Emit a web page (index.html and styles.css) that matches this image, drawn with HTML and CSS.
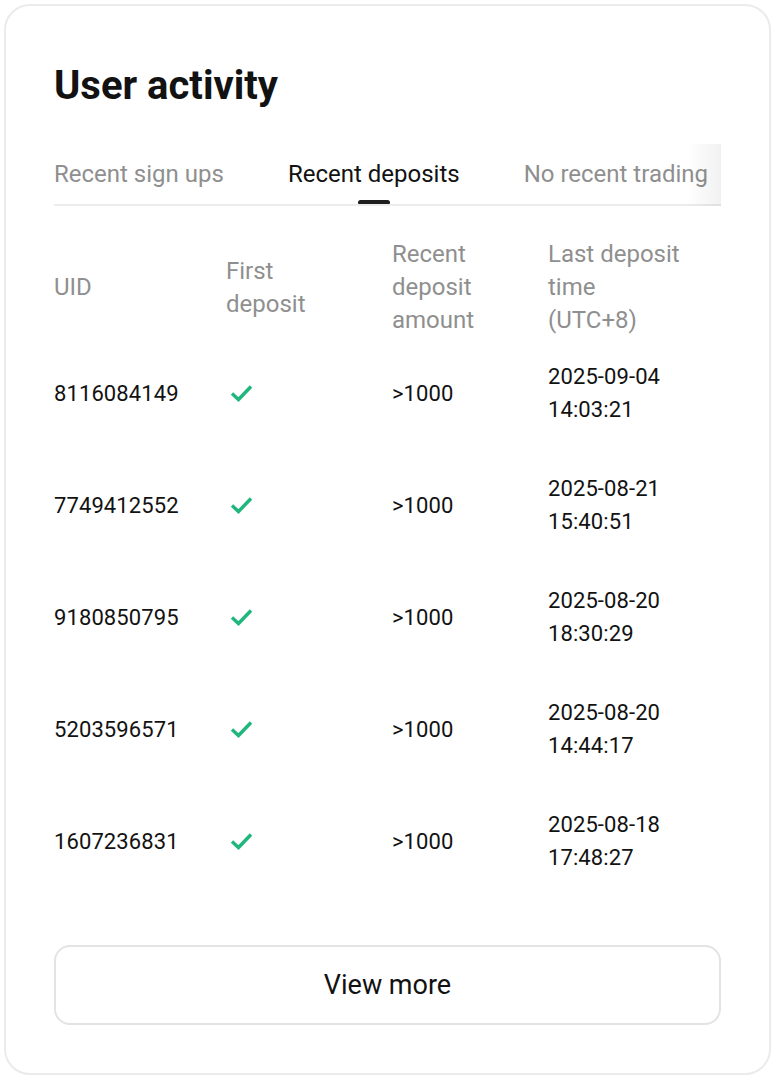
FILE: index.html
```html
<!DOCTYPE html>
<html lang="en">
<head>
<meta charset="utf-8">
<title>User activity</title>
<link rel="stylesheet" href="styles.css">
</head>
<body>
<section class="card">
  <h1 class="title">User activity</h1>

  <div class="tabs-wrap">
    <div class="tabs">
      <div class="tab">Recent sign ups</div>
      <div class="tab active">Recent deposits</div>
      <div class="tab">No recent trading</div>
    </div>
    <div class="tabs-fade"></div>
  </div>

  <div class="table">
    <div class="row head">
      <div class="th">UID</div>
      <div class="th">First deposit</div>
      <div class="th">Recent deposit amount</div>
      <div class="th last">Last deposit time (UTC+8)</div>
    </div>

    <div class="row">
      <div class="td">8116084149</div>
      <div class="td"><svg class="check" width="24" height="18" viewBox="0 0 24 18"><path d="M2 9.5 L8.5 15.5 L21 2.5" fill="none" stroke="#1fb77b" stroke-width="3.4"/></svg></div>
      <div class="td">&gt;1000</div>
      <div class="td">2025-09-04 14:03:21</div>
    </div>
    <div class="row">
      <div class="td">7749412552</div>
      <div class="td"><svg class="check" width="24" height="18" viewBox="0 0 24 18"><path d="M2 9.5 L8.5 15.5 L21 2.5" fill="none" stroke="#1fb77b" stroke-width="3.4"/></svg></div>
      <div class="td">&gt;1000</div>
      <div class="td">2025-08-21 15:40:51</div>
    </div>
    <div class="row">
      <div class="td">9180850795</div>
      <div class="td"><svg class="check" width="24" height="18" viewBox="0 0 24 18"><path d="M2 9.5 L8.5 15.5 L21 2.5" fill="none" stroke="#1fb77b" stroke-width="3.4"/></svg></div>
      <div class="td">&gt;1000</div>
      <div class="td">2025-08-20 18:30:29</div>
    </div>
    <div class="row">
      <div class="td">5203596571</div>
      <div class="td"><svg class="check" width="24" height="18" viewBox="0 0 24 18"><path d="M2 9.5 L8.5 15.5 L21 2.5" fill="none" stroke="#1fb77b" stroke-width="3.4"/></svg></div>
      <div class="td">&gt;1000</div>
      <div class="td">2025-08-20 14:44:17</div>
    </div>
    <div class="row">
      <div class="td">1607236831</div>
      <div class="td"><svg class="check" width="24" height="18" viewBox="0 0 24 18"><path d="M2 9.5 L8.5 15.5 L21 2.5" fill="none" stroke="#1fb77b" stroke-width="3.4"/></svg></div>
      <div class="td">&gt;1000</div>
      <div class="td">2025-08-18 17:48:27</div>
    </div>
  </div>

  <button class="more" type="button">View more</button>
</section>
</body>
</html>
```

FILE: styles.css
```css
* { box-sizing: border-box; }

html, body {
  margin: 0;
  padding: 0;
  background: #ffffff;
}

body {
  padding: 4px 4px 0 4px;
  font-family: Roboto, "Liberation Sans", Arial, sans-serif;
  color: #121212;
}

.card {
  width: 767px;
  height: 1071px;
  border: 2px solid #ebebeb;
  border-radius: 26px;
  padding: 56px 48px 0 48px;
  display: flex;
  flex-direction: column;
}

.title {
  margin: 0;
  font-size: 40px;
  line-height: 48px;
  font-weight: 700;
  color: #121212;
}

.tabs-wrap {
  position: relative;
  margin-top: 34px;
}

.tabs {
  display: flex;
  gap: 64px;
  height: 62px;
  border-bottom: 2px solid #ececec;
  overflow: hidden;
}

.tab {
  position: relative;
  display: flex;
  align-items: center;
  font-size: 24px;
  line-height: 32px;
  color: #8f8f8f;
  white-space: nowrap;
}

.tab.active {
  color: #121212;
}

.tab.active::after {
  content: "";
  position: absolute;
  left: 50%;
  bottom: -1px;
  width: 32px;
  height: 5px;
  margin-left: -16px;
  border-radius: 3px;
  background: #1e1e1e;
}

.tabs-fade {
  position: absolute;
  right: 0;
  top: 0;
  width: 34px;
  height: 62px;
  background: linear-gradient(to right, rgba(255,255,255,0), rgba(0,0,0,0.055));
  pointer-events: none;
}

.table {
  margin-top: 32px;
  display: flex;
  flex-direction: column;
}

.row {
  display: grid;
  grid-template-columns: 172px 166px 156px 1fr;
  align-items: center;
}

.row.head {
  min-height: 99px;
}

.th {
  font-size: 24px;
  line-height: 33px;
  color: #8f8f8f;
  padding-right: 44px;
}

.th.last {
  padding-right: 36px;
}

.row:not(.head) {
  height: 112px;
}

.td {
  font-size: 22px;
  line-height: 33px;
  color: #121212;
  letter-spacing: 0.1px;
  padding-right: 40px;
}

.td:last-child {
  padding-right: 0;
}

.check {
  display: block;
  margin-left: 4px;
}

.more {
  margin-top: 48px;
  height: 80px;
  width: 100%;
  border: 2px solid #e3e3e3;
  border-radius: 16px;
  background: #ffffff;
  font-family: Roboto, "Liberation Sans", Arial, sans-serif;
  font-size: 27px;
  color: #121212;
  cursor: pointer;
}
```
